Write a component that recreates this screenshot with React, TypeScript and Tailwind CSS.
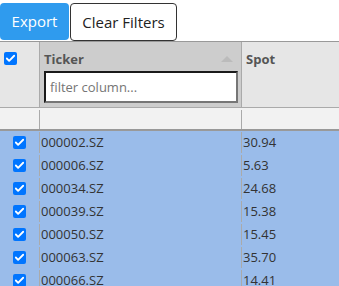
import { Check } from 'lucide-react';

const rows = [
  { ticker: '000002.SZ', spot: '30.94' },
  { ticker: '000006.SZ', spot: '5.63' },
  { ticker: '000034.SZ', spot: '24.68' },
  { ticker: '000039.SZ', spot: '15.38' },
  { ticker: '000050.SZ', spot: '15.45' },
  { ticker: '000063.SZ', spot: '35.70' },
  { ticker: '000066.SZ', spot: '14.41' },
];

function Box() {
  return (
    <span className="flex h-[13px] w-[13px] items-center justify-center rounded-[2px] bg-[#0075ff]">
      <Check className="h-[11px] w-[11px] text-white" strokeWidth={4} />
    </span>
  );
}

export default function App() {
  return (
    <div className="h-[286px] w-[339px] overflow-hidden bg-white font-['Segoe_UI','Open_Sans',sans-serif] text-[13px]">
      <div className="flex items-start gap-[1px] pt-[3px]">
        <button
          type="button"
          className="h-[37px] w-[69px] rounded-[4px] bg-[#2f9bee] text-[15px] text-white"
        >
          Export
        </button>
        <button
          type="button"
          className="h-[38px] w-[107px] rounded-[4px] border border-[#333] bg-white text-[15px] text-[#222]"
        >
          Clear Filters
        </button>
      </div>

      <div className="border-t border-[#999]">
        {/* header */}
        <div className="flex h-[66px] border-b border-[#aaa]">
          <div className="w-[40px] shrink-0 border-r border-[#aaa] bg-[#e6e6e6] pl-[4px] pt-[10px]">
            <Box />
          </div>
          <div className="relative w-[202px] shrink-0 border-r border-[#aaa] bg-[#cdcdcd] px-[4px] pt-[8px]">
            <div className="font-bold leading-[18px] text-[#555]">Ticker</div>
            <span className="absolute right-[8px] top-[14px] h-0 w-0 border-x-[6px] border-b-[6px] border-x-transparent border-b-[#bbb]" />
            <input
              placeholder="filter column..."
              className="mt-[3px] h-[32px] w-[194px] border-2 border-b-[#767676] border-l-[#1a1a1a] border-r-[#767676] border-t-[#1a1a1a] bg-white px-[4px] text-[13px] text-[#333] placeholder:text-[#757575] outline-none"
            />
          </div>
          <div className="flex-1 bg-[#e6e6e6] px-[4px] pt-[8px]">
            <div className="font-bold leading-[18px] text-[#555]">Spot</div>
          </div>
        </div>

        {/* calc row */}
        <div className="flex h-[23px] border-b-2 border-[#999] bg-[#f2f2f2]">
          <div className="mt-[2px] w-[40px] shrink-0 border-r border-[#aaa]" />
          <div className="mt-[2px] w-[202px] shrink-0 border-r border-[#aaa]" />
          <div className="flex-1" />
        </div>

        {/* rows */}
        {rows.map((r) => (
          <div key={r.ticker} className="flex h-[23px] bg-[#9abcea] text-[#333]">
            <div className="my-[1px] flex w-[40px] shrink-0 items-center justify-center border-r border-[#aaa]">
              <Box />
            </div>
            <div className="my-[1px] flex w-[202px] shrink-0 items-center border-r border-[#aaa] pl-[1px]">
              {r.ticker}
            </div>
            <div className="flex flex-1 items-center pl-[1px]">{r.spot}</div>
          </div>
        ))}
      </div>
    </div>
  );
}
